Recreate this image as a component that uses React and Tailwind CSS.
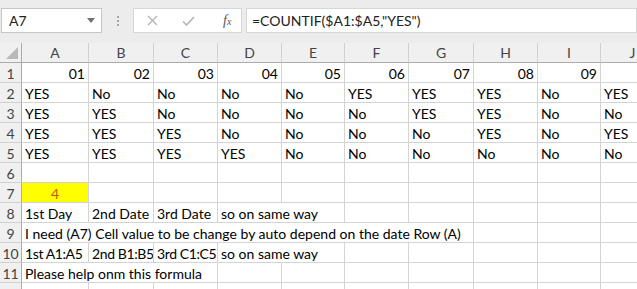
import React from 'react';

// Excel-like sheet: COUNTIF question screenshot

const COLS = ['A', 'B', 'C', 'D', 'E', 'F', 'G', 'H', 'I', 'J'];

const yesNo = [
  ['YES', 'No', 'No', 'No', 'No', 'YES', 'YES', 'YES', 'No', 'YES'],
  ['YES', 'YES', 'No', 'No', 'No', 'No', 'YES', 'YES', 'No', 'No'],
  ['YES', 'YES', 'YES', 'No', 'No', 'No', 'No', 'YES', 'No', 'YES'],
  ['YES', 'YES', 'YES', 'YES', 'No', 'No', 'No', 'No', 'No', 'No'],
];

// each row: list of cells {text, span, align, cls}
function plain(texts, cls) {
  return texts.map((t) => ({ text: t, span: 1, cls }));
}

const rows = [
  ['01', '02', '03', '04', '05', '06', '07', '08', '09', ''].map((t) => ({ text: t, span: 1, align: 'right' })),
  ...yesNo.map((r) => plain(r)),
  plain(['', '', '', '', '', '', '', '', '', '']),
  [{ text: '4', span: 1, align: 'center', cls: 'bg-[#ffff00] text-[#c65911]' }, ...plain(['', '', '', '', '', '', '', '', ''])],
  [...plain(['1st Day', '2nd Date', '3rd Date']), { text: 'so on same way', span: 2 }, ...plain(['', '', '', '', ''])],
  [{ text: 'I need (A7) Cell value to be change by auto depend on the date Row (A)', span: 7 }, ...plain(['', '', ''])],
  [...plain(['1st A1:A5', '2nd B1:B5', '3rd C1:C5'], 'tracking-[-0.4px] text-black'), { text: 'so on same way', span: 2 }, ...plain(['', '', '', '', ''])],
  [{ text: 'Please help onm this formula', span: 3 }, ...plain(['', '', '', '', '', '', ''])],
  plain(['', '', '', '', '', '', '', '', '', '']),
];

function Cell({ cell }) {
  const align =
    cell.align === 'right' ? 'justify-end pr-[3px]' : cell.align === 'center' ? 'justify-center' : 'justify-start pl-[3px]';
  return (
    <div
      className={`h-5 flex items-end pb-[1px] whitespace-nowrap overflow-hidden border-r border-b border-[#d4d4d4] ${align} ${cell.cls || 'text-black'}`}
      style={{ gridColumn: `span ${cell.span}` }}
    >
      {cell.text}
    </div>
  );
}

export default function App() {
  return (
    <div className="w-[637px] h-[289px] overflow-hidden bg-white" style={{ fontFamily: 'Lato, "Open Sans", sans-serif' }}>
      {/* formula bar */}
      <div className="h-[43px] bg-[#ececec] flex items-start pt-[8px] text-[14px]">
        <div className="ml-[1px] w-[101px] h-[25px] bg-white border border-[#c6c6c6] flex items-center justify-between pl-[7px] pr-[6px] text-[#222]">
          <span>A7</span>
          <svg width="8" height="5" viewBox="0 0 8 5"><path d="M0 0h8L4 5z" fill="#707070" /></svg>
        </div>
        <div className="w-[31px] h-[25px] flex flex-col items-center justify-center gap-[2px]">
          <div className="w-[2px] h-[2px] bg-[#a6a6a6]" />
          <div className="w-[2px] h-[2px] bg-[#a6a6a6]" />
          <div className="w-[2px] h-[2px] bg-[#a6a6a6]" />
        </div>
        <div className="w-[109px] h-[25px] bg-white border border-[#d6d6d6] flex items-center">
          <svg className="ml-[13px]" width="11" height="11" viewBox="0 0 11 11">
            <path d="M1 1l9 9M10 1l-9 9" stroke="#b4b4b4" strokeWidth="1.3" />
          </svg>
          <svg className="ml-[24px]" width="13" height="10" viewBox="0 0 13 10">
            <path d="M1 5.5l3.5 3.5L12 1" stroke="#b4b4b4" strokeWidth="1.6" fill="none" />
          </svg>
          <span className="ml-[28px] italic text-[#555] text-[14px]" style={{ fontFamily: '"Liberation Serif", serif' }}>
            f<span className="text-[10px]">x</span>
          </span>
        </div>
        <div className="ml-[4px] flex-1 h-[25px] bg-white border border-[#d6d6d6] flex items-center pl-[5px] text-[#222] whitespace-nowrap">
          =COUNTIF($A1:$A5,"YES")
        </div>
      </div>

      {/* sheet grid */}
      <div className="grid grid-cols-[22px_67px_65px_64px_64px_63px_64px_65px_64px_63px_64px] text-[14px] leading-none">
        <div className="h-5 bg-[#f0f0f0] border-r border-b border-[#ababab] relative">
          <svg className="absolute right-[3px] bottom-[3px]" width="12" height="12" viewBox="0 0 12 12">
            <path d="M12 0v12H0z" fill="#b8b8b8" />
          </svg>
        </div>
        {COLS.map((c) => (
          <div
            key={c}
            className="h-5 bg-[#f0f0f0] border-r border-b border-r-[#d0d0d0] border-b-[#ababab] flex items-center justify-center text-[#444]"
          >
            {c}
          </div>
        ))}
        {rows.map((r, i) => (
          <React.Fragment key={i}>
            <div className="h-5 bg-[#f0f0f0] border-r border-b border-r-[#ababab] border-b-[#d0d0d0] flex items-end pb-[1px] justify-center text-[#444]">
              {i < 11 ? i + 1 : ''}
            </div>
            {r.map((cell, j) => (
              <Cell key={j} cell={cell} />
            ))}
          </React.Fragment>
        ))}
      </div>
    </div>
  );
}
